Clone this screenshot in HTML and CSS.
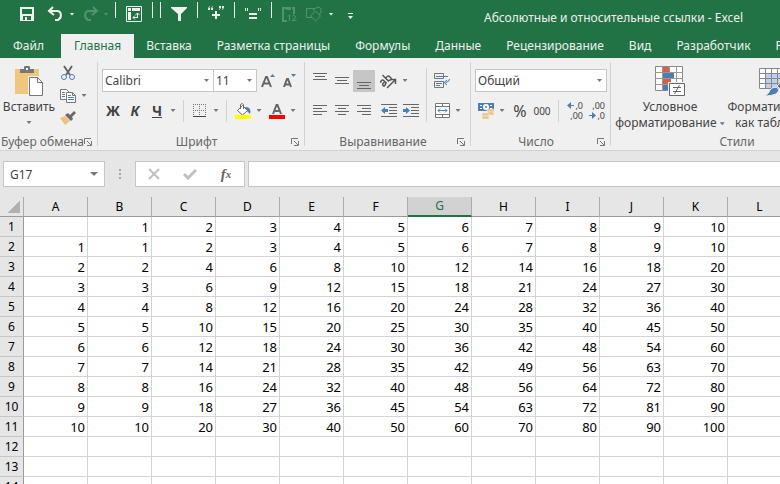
FILE: index.html
```html
<!DOCTYPE html>
<html lang="ru">
<head>
    <meta charset="UTF-8">
    <meta name="viewport" content="width=device-width, initial-scale=1.0">
    <title>Абсолютные и относительные ссылки - Excel</title>
    <link rel="stylesheet" href="styles.css">
</head>
<body>
    <header class="titlebar">
        <div class="quick-access">
            <button class="qa" aria-label="Сохранить">
                <svg width="16" height="16"><path fill="#f0f0f0" fill-rule="evenodd" d="M1 1h14v14H1zM3 3v5h10V3zM4 10v4h2v-3h2v3h4v-4z"/></svg>
            </button>
            <button class="qa undo" aria-label="Отменить">
                <svg width="16" height="16" fill="none" stroke="#f0f0f0" stroke-width="2"><path d="M6 1L2 5l5 4M2 5h8c5 0 5 7 1 9H8"/></svg>
            </button>
            <button class="drop light" aria-label="Список отмены"></button>
            <button class="qa dim" aria-label="Повторить">
                <svg width="16" height="16" fill="none" stroke="#f0f0f0" stroke-width="2"><path d="M10 1l4 4-5 4M14 5H6C1 5 1 12 5 14h3"/></svg>
            </button>
            <button class="drop light dim" aria-label="Список повтора"></button>
            <span class="bar"></span>
            <button class="qa" aria-label="Сводная таблица">
                <svg width="16" height="16" fill="none" stroke="#f0f0f0"><path d="M.5.5h15v15H.5z"/><path fill="#f0f0f0" stroke="none" d="M2 2h3v3H2zM6 2h8v3H6zM2 6h3v8H2z"/><path d="M11.500 12V7M9.500 9l2-2 2 2M12 11.500H7M9 9.500l-2 2 2 2"/></svg>
            </button>
            <span class="bar"></span><span class="bar near"></span>
            <button class="qa" aria-label="Фильтр">
                <svg width="16" height="16"><path fill="#f0f0f0" d="M0 1h16v1l-6 6v7H7V8L0 2z"/></svg>
            </button>
            <span class="bar"></span>
            <button class="qa" aria-label="Кавычки и плюс">
                <svg width="16" height="16" fill="#f0f0f0"><path d="M0 3q0-2 2-3v1q-1 .5-1 1h1v2H0zM3 3q0-2 2-3v1q-1 .5-1 1h1v2H3zM13 1q0 2-2 3V3q1-.5 1-1h-1V0h2zM16 1q0 2-2 3V3q1-.5 1-1h-1V0h2z"/><path d="M7 5h2v3h3v2H9v3H7v-3H4V8h3z"/></svg>
            </button>
            <span class="bar"></span>
            <button class="qa" aria-label="Кавычки и равно">
                <svg width="16" height="16" fill="#f0f0f0"><path d="M0 2h1v3H0zM2 2h1v3H2zM13 2h1v3h-1zM15 2h1v3h-1zM4 7h8v2H4zM4 11h8v2H4z"/></svg>
            </button>
            <span class="bar"></span>
            <button class="qa dim" aria-label="Вставить значения">
                <svg width="16" height="16" fill="none" stroke="#f0f0f0"><path stroke-width="2" d="M4 2H1v13h4M10 2h2v6"/><path fill="#f0f0f0" d="M4.500 1.500h4v2h-4z"/><path d="M7.500 15V9L6 10.500M10 10.500q2-2.500 3.500 0 .5 1.500-3.500 4h4.500"/></svg>
            </button>
            <button class="qa shapes dim" aria-label="Фигуры">
                <svg width="16" height="16" fill="none" stroke="#f0f0f0"><path d="M6 11.500H.500v-9H9M9.500 5l5 5-5 5-5-5zM7 5q2-4 6-4 3 1 2 5l-2 3"/></svg>
            </button>
            <button class="drop light" aria-label="Список фигур"></button>
            <button class="qa" aria-label="Настройка панели">
                <svg width="16" height="16" fill="#f0f0f0"><path d="M6 7h5v1H6zM6 10h5L8.500 13z"/></svg>
            </button>
        </div>
        <h1 class="doc-title">Абсолютные и относительные ссылки - Excel</h1>
    </header>

    <nav class="tabs">
        <a class="file" href="#">Файл</a>
        <a class="active" href="#">Главная</a>
        <a href="#">Вставка</a>
        <a href="#">Разметка страницы</a>
        <a href="#">Формулы</a>
        <a href="#">Данные</a>
        <a href="#">Рецензирование</a>
        <a href="#">Вид</a>
        <a href="#">Разработчик</a>
        <a href="#">Power Pivot</a>
    </nav>

    <div class="ribbon">
        <section class="group clipboard">
            <div class="tools">
                <button class="big paste">
                    <svg width="28" height="30"><path fill="#eec77c" d="M0 3h24v25H0z"/><path fill="#777" d="M5 7V3h4V1q0-1 1-1h4q1 0 1 1v2h4v4z"/><path fill="#f0f0f0" d="M11 2h2v2h-2z"/><path fill="#fff" stroke="#f0f0f0" stroke-width="3" d="M14.500 11.500h8l5 5v13h-13z"/><path fill="#fff" stroke="#777" d="M14.500 11.500h8l5 5v13h-13zM22.500 11.500v5h5"/></svg>
                    <span>Вставить</span>
                    <i class="caret"></i>
                </button>
                <div class="stack">
                    <button class="tool" aria-label="Вырезать">
                        <svg width="16" height="16" fill="none" stroke-width="2"><path stroke="#666" d="M4 1l6 9M12 1l-6 9"/><g stroke="#4a7fb5" stroke-width="1"><circle cx="4" cy="12" r="2.500"/><circle cx="12" cy="12" r="2.500"/></g></svg>
                    </button>
                    <div class="line">
                        <button class="tool" aria-label="Копировать">
                            <svg width="16" height="16" fill="#fff" stroke="#777"><path d="M.5 1.500h6l3 3v7h-9z"/><path stroke="#4a7fb5" d="M2 4.500h3M2 6.500h3M2 8.500h3"/><path d="M6.500 4.500h6l3 3v7h-9zM12.500 4.500v3h3"/><path stroke="#4a7fb5" d="M8 7.500h3M8 9.500h6M8 11.500h6"/></svg>
                        </button>
                        <button class="drop" aria-label="Варианты копирования"></button>
                    </div>
                    <button class="tool" aria-label="Формат по образцу">
                        <svg width="16" height="16"><path fill="#eec183" d="M0 8l5-2 5 5-5 4z"/><path fill="#6a6a6a" d="M5 5l3-2 2 2 4-4 2 2-4 4 1 2-2 2z"/></svg>
                    </button>
                </div>
            </div>
            <footer class="caption"><span>Буфер обмена</span><button class="launcher" aria-label="Параметры буфера"><svg width="8" height="8"><use href="#launch"/></svg></button></footer>
        </section>

        <section class="group font">
            <div class="tools rows">
                <div class="line">
                    <label class="combo grow"><select aria-label="Шрифт"><option>Calibri</option></select></label>
                    <label class="combo size"><select aria-label="Размер шрифта"><option>11</option></select></label>
                    <button class="tool" aria-label="Увеличить размер"><svg width="16" height="16"><path fill="none" stroke="#666" stroke-width="2" d="M2 14L6 4h1l4 10M3 10.500h7"/><path fill="#4a7fb5" d="M10 4l2.500-3L15 4z"/></svg></button>
                    <button class="tool" aria-label="Уменьшить размер"><svg width="16" height="16"><path fill="none" stroke="#666" stroke-width="2" d="M2 14l3-8h1l3 8M3 11.500h5"/><path fill="#4a7fb5" d="M9 1h5l-2.500 3z"/></svg></button>
                </div>
                <div class="line">
                    <button class="tool letter">Ж</button>
                    <button class="tool letter italic">К</button>
                    <button class="tool letter under">Ч</button>
                    <button class="drop" aria-label="Вид подчеркивания"></button>
                    <span class="vsep"></span>
                    <button class="tool" aria-label="Границы"><svg width="14" height="14" fill="none" stroke="#777"><path stroke-dasharray="1 1" d="M.5 0v12M6.500 0v12M12.500 0v12M0 .500h13M0 6.500h13"/><path d="M0 12.500h13" stroke="#444"/></svg></button>
                    <button class="drop" aria-label="Виды границ"></button>
                    <span class="vsep"></span>
                    <button class="tool" aria-label="Цвет заливки"><svg width="16" height="16"><path fill="#4a7fb5" d="M10 4q7 0 5 7l-3-3z"/><path fill="#fff" stroke="#666" d="M7.500 2.500l5 5-5 4.500L2.500 7.500zM5.500 6V1.500q2-2 3 0V6"/><path fill="#ff0" d="M0 12h16v4H0z"/></svg></button>
                    <button class="drop" aria-label="Цвета заливки"></button>
                    <button class="tool color" aria-label="Цвет текста"><svg width="16" height="16"><path fill="none" stroke="#666" stroke-width="2" d="M4 11L7.500 2h1L12 11M5 8h6"/><path fill="#f00" d="M0 12h16v4H0z"/></svg></button>
                    <button class="drop" aria-label="Цвета текста"></button>
                </div>
            </div>
            <footer class="caption"><span>Шрифт</span><button class="launcher" aria-label="Параметры шрифта"><svg width="8" height="8"><use href="#launch"/></svg></button></footer>
        </section>

        <section class="group align">
            <div class="tools">
                <div class="rows">
                    <div class="line">
                        <button class="tool" aria-label="По верхнему краю"><svg class="lines" width="14" height="16"><path d="M0 .500h14M2 3.500h10M0 6.500h14"/></svg></button>
                        <button class="tool" aria-label="По середине"><svg class="lines" width="14" height="16"><path d="M0 4.500h14M2 7.500h10M0 10.500h14"/></svg></button>
                        <button class="tool pressed" aria-label="По нижнему краю"><svg class="lines" width="14" height="16"><path d="M0 9.500h14M2 12.500h10M0 15.500h14"/></svg></button>
                        <button class="tool wide" aria-label="Ориентация"><svg width="18" height="16" fill="none" stroke="#555"><g transform="rotate(-45 6 7)" stroke-width="1.500"><path d="M0 5q4-2 4 1v4M4 7Q0 7 0 9t4 0M7 1v9M7 6q4-2 4 2t-4 1"/></g><path stroke-width="1.500" d="M7 15l8-8M11 6.500h4.500V11"/></svg></button>
                        <button class="drop" aria-label="Варианты ориентации"></button>
                    </div>
                    <div class="line">
                        <button class="tool" aria-label="По левому краю"><svg class="lines" width="14" height="11"><path d="M0 .500h14M0 3.500h9M0 6.500h14M0 9.500h9"/></svg></button>
                        <button class="tool" aria-label="По центру"><svg class="lines" width="14" height="11"><path d="M0 .500h14M3 3.500h8M0 6.500h14M3 9.500h8"/></svg></button>
                        <button class="tool" aria-label="По правому краю"><svg class="lines" width="14" height="11"><path d="M0 .500h14M5 3.500h9M0 6.500h14M5 9.500h9"/></svg></button>
                        <button class="tool wide" aria-label="Уменьшить отступ"><svg class="lines" width="16" height="14"><path d="M0 .500h16M8 3.500h8M8 6.500h8M8 9.500h8M0 12.500h16"/><path class="arrow" d="M7 5H4V3L0 6.500 4 10V8h3z"/></svg></button>
                        <button class="tool" aria-label="Увеличить отступ"><svg class="lines" width="16" height="14"><path d="M0 .500h16M8 3.500h8M8 6.500h8M8 9.500h8M0 12.500h16"/><path class="arrow" d="M0 5h3V3l4 3.500L3 10V8H0z"/></svg></button>
                    </div>
                </div>
                <span class="vsep tall"></span>
                <div class="rows">
                    <div class="line">
                        <button class="tool" aria-label="Перенести текст"><svg width="16" height="16" fill="none" stroke="#777"><path d="M.5.500h9v5h-9zM.5 8.500h9v6h-9z"/><path stroke="#4a7fb5" d="M2 3.500h12M2 10.500h6M2 12.500h4M15.500 6q0 3-4 3.500M13 7l-3 2.500 3 2.500"/></svg></button>
                    </div>
                    <div class="line">
                        <button class="tool" aria-label="Объединить"><svg width="15" height="15" fill="#fff" stroke="#777"><path d="M.5.500h14v14H.500zM.5 3.500h14M.5 11.500h14M7.500 0v3M7.500 12v3"/><path stroke="#4a7fb5" d="M3 7.500h9M5 5.500l-2 2 2 2M10 5.500l2 2-2 2"/></svg></button>
                        <button class="drop" aria-label="Варианты объединения"></button>
                    </div>
                </div>
            </div>
            <footer class="caption"><span>Выравнивание</span><button class="launcher" aria-label="Параметры выравнивания"><svg width="8" height="8"><use href="#launch"/></svg></button></footer>
        </section>

        <section class="group number">
            <div class="tools rows">
                <div class="line">
                    <label class="combo grow"><select aria-label="Числовой формат"><option>Общий</option></select></label>
                </div>
                <div class="line">
                    <button class="tool" aria-label="Финансовый формат"><svg width="16" height="16"><path fill="#4a7fb5" d="M0 0h16v8H0z"/><path fill="#fff" d="M2 2h2v1H2zM12 2h2v1h-2zM2 5h2v1H2zM12 5h2v1h-2z"/><circle cx="8" cy="4" r="3" fill="#fff"/><circle cx="8" cy="4" r="1" fill="#4a7fb5"/><g fill="#eec183" stroke="#f0f0f0" stroke-width=".5"><rect x="9" y="6" width="7" height="3" rx="1"/><rect x="9" y="9" width="7" height="3" rx="1"/><rect x="4" y="10" width="7" height="3" rx="1"/><rect x="4" y="13" width="7" height="3" rx="1"/></g></svg></button>
                    <button class="drop" aria-label="Валюты"></button>
                    <button class="tool percent">%</button>
                    <button class="tool zeros">000</button>
                    <span class="vsep"></span>
                    <button class="tool decimals" aria-label="Увеличить разрядность">
                        <span class="digits"><svg width="7" height="7"><path class="arrow" d="M7 3H4V0L0 3.500 4 7V4h3z"/></svg>,0</span>
                        <span class="digits">,00</span>
                    </button>
                    <button class="tool decimals" aria-label="Уменьшить разрядность">
                        <span class="digits">,00</span>
                        <span class="digits"><svg width="7" height="7"><path class="arrow" d="M0 3h3V0l4 3.500L3 7V4H0z"/></svg>,0</span>
                    </button>
                </div>
            </div>
            <footer class="caption"><span>Число</span><button class="launcher" aria-label="Параметры числа"><svg width="8" height="8"><use href="#launch"/></svg></button></footer>
        </section>

        <section class="group styles">
            <div class="tools">
                <button class="big">
                    <svg width="30" height="30"><path fill="#fff" stroke="#888" d="M.5.500h27v24H.500z"/><path fill="#d6603f" d="M8 1h6v5H8zM8 13h8v5H8z"/><path fill="#4a7fb5" d="M8 7h11v5H8zM8 19h5v5H8z"/><path fill="none" stroke="#999" d="M7.500 0v25M14.500 0v6M14.500 18v7M21.500 0v25M0 6.500h28M0 12.500h28M0 18.500h28"/><path fill="#fff" stroke="#f0f0f0" stroke-width="3" d="M14.500 17.500h15v12h-15z"/><path fill="#fff" stroke="#666" d="M14.500 17.500h15v12h-15zM18 21.500h8M18 25.500h8M24.500 19l-5 9"/></svg>
                    <span>Условное</span>
                    <span>форматирование <i class="caret"></i></span>
                </button>
                <button class="big as-table">
                    <svg width="30" height="30"><path fill="#fff" stroke="#888" d="M.5 2.500h27v20H.500z"/><path fill="#bdd0e9" d="M7 8h20v14H7z"/><path fill="none" stroke="#888" d="M6.500 2v21M12.500 2v21M18.500 2v21M24.500 2v21M0 7.500h28M0 12.500h28M0 17.500h28"/><path fill="#4a7fb5" stroke="#f0f0f0" d="M5 30q5-2 6-6 4-5 9-1 0 7-15 7z"/><path fill="#777" stroke="#f0f0f0" d="M18 20L28 9l2 2v6l-8 7z"/></svg>
                    <span>Форматировать</span>
                    <span>как таблицу <i class="caret"></i></span>
                </button>
            </div>
            <footer class="caption"><span>Стили</span></footer>
        </section>
    </div>

    <div class="formula-bar">
        <label class="name-box"><input type="text" value="G17" aria-label="Имя ячейки"></label>
        <span class="grip"></span>
        <div class="formula-tools">
            <button aria-label="Отмена"><svg width="12" height="12" fill="none" stroke="#c0c0c0" stroke-width="2"><path d="M1 1l10 10M11 1L1 11"/></svg></button>
            <button aria-label="Ввод"><svg width="14" height="12" fill="none" stroke="#c0c0c0" stroke-width="3"><path d="M1 6l4 4 8-8"/></svg></button>
            <button class="fx" aria-label="Вставить функцию">f<sub>x</sub></button>
        </div>
        <input class="formula" type="text" aria-label="Строка формул">
    </div>

    <main class="sheet">
        <table>
            <thead><tr id="letters"><th class="corner"></th></tr></thead>
            <tbody id="cells"></tbody>
        </table>
    </main>

    <svg width="0" height="0" class="defs">
        <symbol id="launch" viewBox="0 0 8 8"><path fill="none" stroke="#777" d="M.5 6V.500H7M3 3l4 4M7.500 3v4.500H3"/></symbol>
    </svg>

    <script>
        const columns = 'ABCDEFGHIJKL';
        const letters = document.getElementById('letters');
        const cells = document.getElementById('cells');

        for (const name of columns) {
            const th = document.createElement('th');
            th.textContent = name;
            if (name === 'G') th.className = 'selected';
            letters.appendChild(th);
        }

        // Таблица умножения: множители в строке 1 и столбце A
        function cellValue(row, col) {
            if (row > 11 || col > 10) return '';
            if (row === 1) return col === 0 ? '' : col;
            return (row - 1) * (col || 1);
        }

        for (let row = 1; row <= 14; row++) {
            const tr = cells.insertRow();
            const th = document.createElement('th');
            th.textContent = row;
            tr.appendChild(th);
            for (let col = 0; col < columns.length; col++) {
                tr.insertCell().textContent = cellValue(row, col);
            }
        }
    </script>
</body>
</html>
```
FILE: styles.css
```css
* {
    box-sizing: border-box;
}
body {
    margin: 0;
    height: 100vh;
    overflow: hidden;
    display: flex;
    flex-direction: column;
    font-family: "Noto Sans", "Open Sans", sans-serif;
    font-size: 12px;
    color: #444;
    background: #e6e6e6;
}
button, input, select {
    font: inherit;
    color: inherit;
    margin: 0;
    padding: 0;
    border: none;
    background: none;
}
svg {
    display: block;
    flex: none;
}
.defs {
    position: absolute;
}

/* Title bar */
.titlebar {
    flex: none;
    display: flex;
    height: 34px;
    background: #217346;
    color: #f0f0f0;
}
.quick-access {
    display: flex;
    align-items: center;
    height: 28px;
    padding-left: 19px;
}
.qa {
    width: 16px;
}
.qa.undo {
    margin-left: 12px;
}
.dim {
    opacity: 0.25;
}
.bar {
    width: 1px;
    height: 16px;
    margin: 0 10px 8px;
    background: #f0f0f0;
}
.quick-access .drop {
    margin: 0 6px 0 4px;
}
.quick-access .drop.dim {
    margin: 0 0 0 2px;
}
.drop.dim + .bar {
    margin-left: 4px;
}
.bar.near {
    margin-left: -3px;
}
.shapes {
    margin-left: 8px;
}
.doc-title {
    flex: 1;
    margin: 0;
    padding-left: 126px;
    font-size: 12px;
    font-weight: normal;
    line-height: 36px;
    white-space: nowrap;
}

/* Tabs */
.tabs {
    flex: none;
    display: flex;
    height: 24px;
    overflow: hidden;
    background: #217346;
}
.tabs a {
    flex: none;
    padding: 0 13px 0 12px;
    line-height: 24px;
    color: #f0f0f0;
    text-decoration: none;
}
.tabs .file {
    padding: 0 17px 0 13px;
}
.tabs .active {
    background: #f0f0f0;
    color: #217346;
    padding: 0 13px;
}

/* Ribbon */
.ribbon {
    flex: none;
    display: flex;
    height: 93px;
    overflow: hidden;
    padding-top: 4px;
    background: #f0f0f0;
    border-bottom: 1px solid #d2d2d2;
}
.group {
    flex: none;
    display: flex;
    flex-direction: column;
    height: 84px;
    padding: 0 3px 0 4px;
    border-right: 1px solid #d2d2d2;
}
.clipboard { width: 98px; padding-left: 1px; }
.font { width: 207px; }
.align { width: 166px; }
.number { width: 140px; }
.styles { width: 252px; }
.tools {
    height: 72px;
    flex: none;
    display: flex;
}
.rows {
    display: flex;
    flex-direction: column;
    gap: 7px;
    padding-top: 7px;
}
.line {
    display: flex;
    align-items: center;
    height: 23px;
}
.tool {
    flex: none;
    display: flex;
    align-items: center;
    justify-content: center;
    width: 22px;
    height: 22px;
}
.wide {
    margin-left: 3px;
}
.color {
    margin-left: 2px;
}
.pressed {
    background: #c6c6c6;
}
.lines {
    fill: none;
    stroke: #666;
}
.arrow {
    fill: #4a7fb5;
    stroke: none;
}
.caret {
    display: inline-block;
    width: 5px;
    height: 3px;
    background: #777;
    clip-path: polygon(0 0, 100% 0, 50% 100%);
    vertical-align: middle;
}
.drop {
    flex: none;
    display: flex;
    align-items: center;
    justify-content: center;
    width: 10px;
    height: 22px;
}
.drop::after,
.combo::after,
.name-box::after {
    content: "";
    width: 5px;
    height: 3px;
    background: #777;
    clip-path: polygon(0 0, 100% 0, 50% 100%);
}
.drop.light::after {
    background: #f0f0f0;
}
.vsep {
    flex: none;
    width: 1px;
    height: 22px;
    margin: 0 5px;
    background: #d2d2d2;
}
.vsep.tall {
    height: 54px;
    margin: 6px 4px 0;
}
.combo,
.name-box {
    display: grid;
    align-items: center;
    background: #fff;
    border: 1px solid #c6c6c6;
}
.combo {
    height: 23px;
    width: 44px;
    margin-left: -1px;
}
.combo.grow {
    flex: 1;
    margin: 0;
}
.combo select,
.combo::after,
.name-box input,
.name-box::after {
    grid-area: 1 / 1;
}
.combo::after,
.name-box::after {
    justify-self: end;
    margin-right: 4px;
    pointer-events: none;
}
.combo select {
    appearance: none;
    width: 100%;
    padding-left: 2px;
}
.letter {
    font-size: 14px;
    font-weight: bold;
}
.italic { font-style: italic; }
.under { text-decoration: underline; }
.percent { font-size: 16px; margin-left: 2px; }
.zeros { font-size: 10px; }
.decimals {
    flex-direction: column;
    align-items: flex-end;
    padding-right: 3px;
    font-size: 9px;
    line-height: 10px;
}
.digits {
    display: flex;
    align-items: center;
    gap: 1px;
}
.big {
    display: flex;
    flex-direction: column;
    align-items: center;
    line-height: 16px;
    white-space: nowrap;
}
.big svg {
    margin: 4px 0 3px;
}
.paste {
    width: 56px;
}
.paste .caret {
    margin-top: 6px;
}
.stack {
    display: flex;
    flex-direction: column;
}
.styles .big {
    width: 110px;
}
.styles .as-table {
    width: 98px;
}
.caption {
    display: flex;
    align-items: center;
    height: 16px;
    line-height: 16px;
    color: #666;
    white-space: nowrap;
}
.caption span {
    flex: 1;
    text-align: center;
}
.launcher {
    width: 10px;
}

/* Formula bar */
.formula-bar {
    flex: none;
    display: flex;
    align-items: center;
    height: 46px;
    padding: 0 0 0 3px;
}
.name-box {
    width: 102px;
    height: 26px;
}
.name-box input {
    width: 100%;
    padding-left: 6px;
}
.name-box::after {
    width: 8px;
    height: 4px;
    margin-right: 6px;
}
.grip {
    width: 2px;
    height: 10px;
    margin: 0 14px;
    background: repeating-linear-gradient(#a6a6a6 0 2px, transparent 2px 4px);
}
.formula-tools {
    display: flex;
    width: 110px;
    height: 26px;
    background: #fff;
    border: 1px solid #c6c6c6;
}
.formula-tools button {
    flex: 1;
    display: flex;
    align-items: center;
    justify-content: center;
}
.formula-tools .fx {
    font: italic bold 15px "Liberation Serif", serif;
    color: #666;
}
.fx sub {
    font-size: 11px;
}
.formula {
    flex: 1;
    height: 26px;
    margin-left: 3px;
    padding: 0 6px;
    background: #fff;
    border: 1px solid #c6c6c6;
    border-right: none;
}

/* Sheet */
.sheet {
    flex: 1;
    overflow: hidden;
}
table {
    table-layout: fixed;
    width: 100%;
    min-width: 792px;
    border-collapse: separate;
    border-spacing: 0;
    color: #000;
    font-size: 13px;
    line-height: 18px;
}
th {
    width: 64px;
    height: 20px;
    padding: 0;
    font-size: 12px;
    font-weight: normal;
    background: #e6e6e6;
    border-right: 1px solid #ababab;
    border-bottom: 1px solid #999;
}
tbody th {
    border-right-color: #999;
    border-bottom-color: #c6c6c6;
}
.corner {
    width: 24px;
    background: linear-gradient(135deg, transparent 50%, #b1b1b1 50%) 8px 4px / 12px 12px no-repeat #e6e6e6;
}
.selected {
    color: #217346;
    background: #d2d2d2;
    border-bottom: 2px solid #217346;
}
td {
    height: 20px;
    padding: 1px 2px 0 0;
    text-align: right;
    background: #fff;
    border-right: 1px solid #d4d4d4;
    border-bottom: 1px solid #d4d4d4;
}
```
